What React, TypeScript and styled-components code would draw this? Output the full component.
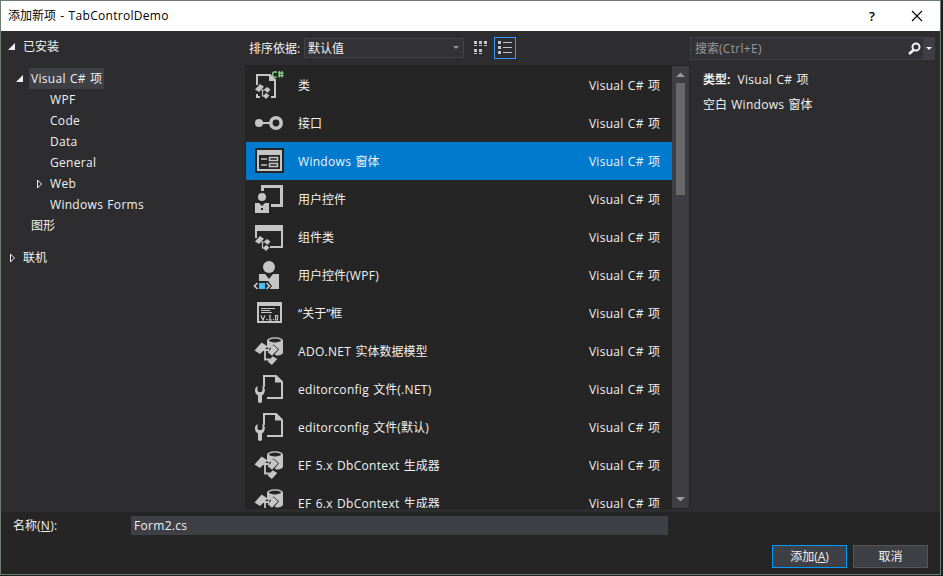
import React from "react";
import styled, { createGlobalStyle } from "styled-components";

const Global = createGlobalStyle`
  * { box-sizing: border-box; }
  html, body { margin: 0; background: #1e1e20; }
  body {
    font: 12px/16px "Open Sans", "Noto Sans CJK SC", sans-serif;
    color: #f1f1f1; overflow: hidden;
  }
`;

const Desktop = styled.div`width: 943px; height: 576px; background: #1e1e20;`;
const Dialog = styled.div`
  width: 941px; height: 575px; border: 1px solid #6b7d70; background: #2d2d30;
  display: flex; flex-direction: column;
`;
const Latin = styled.span`letter-spacing: 0.3px; word-spacing: 0.8px;`;
const TitleBar = styled.header`
  height: 30px; flex: none; background: #fff; color: #000; display: flex; align-items: center;
  padding: 0 17px 0 7px; white-space: pre;
`;
const TitleText = styled.span`flex: 1;`;
const TitleButton = styled.span`
  width: 12px; height: 16px; margin-left: 33px; display: flex; align-items: center; justify-content: center;
  font-size: 13px; font-weight: 600;
`;
const Body = styled.main`height: 481px; flex: none; display: flex;`;
const Sidebar = styled.nav`width: 244px; flex: none; padding-top: 5px;`;
const TreeRow = styled.div<{ $indent: number; $gap?: number }>`
  height: 21px; display: flex; align-items: center; padding-left: ${p => p.$indent}px;
  margin-top: ${p => p.$gap ?? 0}px;
`;
const Twisty = styled.svg`width: 8px; height: 10px; margin-right: 5px; flex: none;`;
const TreeLabel = styled.span<{ $active?: boolean }>`
  height: 21px; line-height: 22px; padding: 0 2px; white-space: nowrap;
  background: ${p => (p.$active ? "#3f3f46" : "transparent")};
`;
const Center = styled.section`width: 445px; flex: none; display: flex; flex-direction: column;`;
const SortBar = styled.div`height: 34px; display: flex; align-items: center; padding-left: 4px;`;
const SortLabel = styled.span`padding-top: 2px; width: 51px; white-space: nowrap;`;
const Combo = styled.div`
  width: 160px; height: 20px; margin-left: 4px; padding: 0 3px; border: 1px solid #434346; background: #333337;
  display: flex; align-items: center; justify-content: space-between;
`;
const ComboValue = styled.span`padding-top: 2px;`;
const ViewButton = styled.span<{ $active?: boolean; $left: number }>`
  width: 22px; height: 22px; margin-left: ${p => p.$left}px; display: flex;
  border: 1px solid ${p => (p.$active ? "#3399ff" : "transparent")};
`;
const ListFrame = styled.div`height: 444px; background: #252526; display: flex; padding: 1px;`;
const List = styled.div`flex: 1; overflow: hidden;`;
const Item = styled.div<{ $selected: boolean }>`
  height: 38px; display: flex; align-items: center; padding: 0 12px 0 7px;
  background: ${p => (p.$selected ? "#007acc" : "transparent")};
`;
const ItemIcon = styled.svg`width: 32px; height: 32px; flex: none; margin-right: 13px;`;
const ItemName = styled.span`flex: 1; padding-top: 2px; white-space: nowrap;`;
const ItemKind = styled.span`padding-top: 2px; white-space: nowrap;`;
const Scrollbar = styled.div`
  width: 17px; background: #3e3e42; display: flex; flex-direction: column; align-items: center;
  justify-content: space-between;
`;
const ScrollTrack = styled.div`width: 9px; flex: 1;`;
const ScrollThumb = styled.div`height: 112px; background: #686868;`;
const ScrollArrow = styled.svg`width: 17px; height: 17px; flex: none;`;
const Details = styled.aside`width: 245px; padding-top: 6px;`;
const Search = styled.div`
  height: 23px; border: 1px solid #3f3f46; background: #333337; display: flex; align-items: center;
  color: #999; padding-left: 4px; line-height: 20px;
`;
const SearchText = styled.span`flex: 1;`;
const SearchMenu = styled.span`
  width: 11px; height: 21px; background: #3f3f46; display: flex; align-items: center; justify-content: center;
`;
const DetailLine = styled.p<{ $gap: number }>`margin: ${p => p.$gap}px 0 0 13px; height: 16px; white-space: pre;`;
const DetailKey = styled.strong`margin-right: 7px;`;
const Footer = styled.footer`flex: 1; background: #252526; display: flex; flex-direction: column;`;
const NameRow = styled.label`
  display: flex; align-items: center; height: 19px; margin-top: 4px; padding-left: 12px;
`;
const NameLabel = styled.span`width: 118px;`;
const NameField = styled.span`width: 537px; height: 19px; line-height: 19px; background: #3f3f46; padding-left: 3px;`;
const Buttons = styled.div`display: flex; justify-content: flex-end; gap: 6px; padding: 10px 12px 0 0;`;
const Button = styled.button<{ $edge: string }>`
  width: 75px; height: 23px; padding: 0; font: inherit; color: #f1f1f1; background: #3f3f46;
  border: 1px solid ${p => p.$edge};
`;

/* Latin runs are set slightly wider than the Chinese text around them. */
const Text = ({ children }: { children: string }) => (
  <>
    {children.split(/([\x20-\x7e]+)/).map((run, i) => (i % 2 ? <Latin key={i}>{run}</Latin> : run))}
  </>
);

const G = "#c5c5c5";
const D = "#252526";

const Nodes = () => (
  <>
    <path d="M2 20.500L7 15l4 2.800-5 5.200z M11 20.500l3-2.500 3.500 2.500-3 3.500z M10 27l3-3 3.500 2.500-3.500 3.500z" fill={G} />
    <path d="M8 21h4M9.500 21v6h2.500" stroke={G} strokeWidth="1.200" fill="none" />
  </>
);

const Database = () => (
  <>
    <path d="M14 6c0-5 16-5 16 0v12c-1 2-4 2.500-7 2.500L14 12z" fill={G} />
    <ellipse cx="22" cy="5.500" rx="6" ry="1.900" fill={D} />
    <path d="M1.500 15.500L8.700 7.500l6 4L7 19z" fill={G} />
    <path d="M10 15.500h5l5.500-6 5.500 4.700-6.700 7.800-3.800-3.200" fill={D} />
    <path d="M9 15h7M12 15v9.500h5" stroke={G} strokeWidth="1.800" fill="none" />
    <path d="M14.500 17l3.500-3v-2.500l2.500-1.300 4.500 4-6 6.600z" fill={G} />
    <path d="M14.700 26.500l5-5.300 4.600 2.800-5.500 6z" fill={G} />
  </>
);

const Config = () => (
  <>
    <path d="M11 14V3h12l6 6v16H14" stroke={G} strokeWidth="2" fill="none" />
    <path d="M22 2l8 7.500h-8z" fill={G} />
    <path d="M4.500 13v4.500l1 1.500h3l1-1.500V13c2 1 2.700 3 2.300 5S10.500 21.500 9 22.500V29q-2 2-4 0v-6.500C3.500 21.500 2.200 20 2 18S2.500 14 4.500 13z" fill={G} />
  </>
);

const icons: Record<string, React.ReactNode> = {
  class: (
    <>
      <path d="M4 16V6h13l5 5v17h-4M4 25v3h3" stroke={G} strokeWidth="2" fill="none" />
      <path d="M16 5l7 7h-7z" fill={G} />
      <Nodes />
      <path d="M24 3h-3l-1.300 1v3l1.300 1.200h3M26.500 2v6.500M29 2v6.500M25 4h5.500M25 6.600h5.500" stroke="#89d185" strokeWidth="1.300" fill="none" />
    </>
  ),
  interface: (
    <>
      <circle cx="6" cy="16" r="4" fill={G} />
      <path d="M9 16h9" stroke={G} strokeWidth="2" />
      <circle cx="23" cy="16" r="5.200" fill="none" stroke={G} strokeWidth="3.600" />
    </>
  ),
  form: (
    <>
      <path d="M2 3h29v25H2z" fill={D} />
      <path d="M4 5h25v21H4z" fill={G} />
      <path d="M6 10h21v14H6z" fill={D} />
      <path d="M8 14h6M8 20h6M16.500 12.500h8v3h-8zM16.500 18.500h8v3h-8z" stroke={G} strokeWidth="1.500" fill="none" />
    </>
  ),
  user: (
    <>
      <path d="M9.500 8V3.500h19v19H18" stroke={G} strokeWidth="3" fill="none" />
      <circle cx="9" cy="14" r="4" fill={G} />
      <path d="M2 20h4l3 3 3-3h4v10H2z" fill={G} />
      <path d="M8 25h2v2H8z" fill={D} />
    </>
  ),
  component: (
    <>
      <path d="M2 4h28v23H17v-2h11V10H4v7H2z" fill={G} />
      <Nodes />
    </>
  ),
  wpf: (
    <>
      <circle cx="16" cy="8" r="6" fill={G} />
      <path d="M6 15h6l4 5 4-5h6v15H6z" fill={G} />
      <path d="M0 22h15l4 5-4 5H0z" fill={D} />
      <path d="M6 24h6v6H6z" fill="#3fc0f8" />
      <path d="M4.500 24l-3 3 3 3M13.500 24l3 3-3 3" fill="none" stroke={G} strokeWidth="1.700" />
    </>
  ),
  about: (
    <>
      <path d="M4 5h25v21H4z" fill={G} />
      <path d="M6 9h21v15H6z" fill={D} />
      <path d="M8 11.500h14M8 13.500h9M8 15.500h11" stroke={G} strokeWidth="1" />
      <path d="M8 18.500l2 4.500 2-4.500M13 22.500h1.500M16 19l1-.5V23M15.500 23h3.500M19.800 22.500h1.200M22.500 18.500h2V23h-2z" stroke={G} strokeWidth="1.200" fill="none" />
    </>
  ),
  database: <Database />,
  config: <Config />,
};

const items: [string, string][] = [
  ["class", "类"],
  ["interface", "接口"],
  ["form", "Windows 窗体"],
  ["user", "用户控件"],
  ["component", "组件类"],
  ["wpf", "用户控件(WPF)"],
  ["about", "“关于”框"],
  ["database", "ADO.NET 实体数据模型"],
  ["config", "editorconfig 文件(.NET)"],
  ["config", "editorconfig 文件(默认)"],
  ["database", "EF 5.x DbContext 生成器"],
  ["database", "EF 6.x DbContext 生成器"],
];

const Expanded = () => (
  <Twisty viewBox="0 0 8 10"><path d="M7 1v7H0z" fill="#f1f1f1" /></Twisty>
);
const Collapsed = () => (
  <Twisty viewBox="0 0 8 10"><path d="M2.500 1v8L6.500 5z" fill="none" stroke="#f1f1f1" /></Twisty>
);

export default function App() {
  return (
    <Desktop>
      <Global />
      <Dialog>
        <TitleBar>
          <TitleText><Text>添加新项 - TabControlDemo</Text></TitleText>
          <TitleButton>?</TitleButton>
          <TitleButton>
            <svg width="12" height="12"><path d="M1 1l10 10M11 1L1 11" stroke="#000" strokeWidth="1.100" /></svg>
          </TitleButton>
        </TitleBar>
        <Body>
          <Sidebar>
            <TreeRow $indent={7}><Expanded /><TreeLabel>已安装</TreeLabel></TreeRow>
            <TreeRow $indent={15} $gap={11}><Expanded /><TreeLabel $active><Text>Visual C# 项</Text></TreeLabel></TreeRow>
            <TreeRow $indent={47}><TreeLabel><Text>WPF</Text></TreeLabel></TreeRow>
            <TreeRow $indent={47}><TreeLabel><Text>Code</Text></TreeLabel></TreeRow>
            <TreeRow $indent={47}><TreeLabel><Text>Data</Text></TreeLabel></TreeRow>
            <TreeRow $indent={47}><TreeLabel><Text>General</Text></TreeLabel></TreeRow>
            <TreeRow $indent={34}><Collapsed /><TreeLabel><Text>Web</Text></TreeLabel></TreeRow>
            <TreeRow $indent={47}><TreeLabel><Text>Windows Forms</Text></TreeLabel></TreeRow>
            <TreeRow $indent={28}><TreeLabel>图形</TreeLabel></TreeRow>
            <TreeRow $indent={7} $gap={11}><Collapsed /><TreeLabel>联机</TreeLabel></TreeRow>
          </Sidebar>
          <Center>
            <SortBar>
              <SortLabel>排序依据:</SortLabel>
              <Combo>
                <ComboValue>默认值</ComboValue>
                <svg width="7" height="4"><path d="M0 0h6L3 3z" fill="#999" /></svg>
              </Combo>
              <ViewButton $left={5}>
                <svg width="20" height="20">
                  <path d="M4 3h3v3H4zM9 3h3v3H9zM14 3h3v3h-3zM4 7h3v1H4zM9 7h3v1H9zM14 7h3v1h-3zM4 11h3v3H4zM9 11h3v3H9zM4 15h3v1H4zM9 15h3v1H9z" fill={G} />
                </svg>
              </ViewButton>
              <ViewButton $active $left={3}>
                <svg width="20" height="20">
                  <path d="M3 3h3v3H3zM3 8h3v3H3zM3 13h3v3H3zM8 4h9v1H8zM8 9h9v1H8zM8 14h9v1H8z" fill={G} />
                </svg>
              </ViewButton>
            </SortBar>
            <ListFrame>
              <List>
                {items.map(([icon, name]) => (
                  <Item key={name} $selected={icon === "form"}>
                    <ItemIcon viewBox="0 0 32 32">{icons[icon]}</ItemIcon>
                    <ItemName><Text>{name}</Text></ItemName>
                    <ItemKind><Text>Visual C# 项</Text></ItemKind>
                  </Item>
                ))}
              </List>
              <Scrollbar>
                <ScrollArrow><path d="M4 11h9L8.500 6.500z" fill="#999" /></ScrollArrow>
                <ScrollTrack><ScrollThumb /></ScrollTrack>
                <ScrollArrow><path d="M4 6h9l-4.500 4.500z" fill="#999" /></ScrollArrow>
              </Scrollbar>
            </ListFrame>
          </Center>
          <Details>
            <Search>
              <SearchText><Text>搜索(Ctrl+E)</Text></SearchText>
              <svg width="17" height="16">
                <circle cx="10" cy="6" r="3.500" fill="none" stroke="#f1f1f1" strokeWidth="2" />
                <path d="M7.500 9L3 13" stroke="#f1f1f1" strokeWidth="2.600" />
              </svg>
              <SearchMenu><svg width="6" height="3"><path d="M0 0h6L3 3z" fill="#f1f1f1" /></svg></SearchMenu>
            </Search>
            <DetailLine $gap={12}><DetailKey>类型:</DetailKey><Text>Visual C# 项</Text></DetailLine>
            <DetailLine $gap={9}><Text>空白 Windows 窗体</Text></DetailLine>
          </Details>
        </Body>
        <Footer>
          <NameRow>
            <NameLabel>名称<Latin>(<u>N</u>):</Latin></NameLabel>
            <NameField><Text>Form2.cs</Text></NameField>
          </NameRow>
          <Buttons>
            <Button $edge="#0097fb">添加(<u>A</u>)</Button>
            <Button $edge="#555558">取消</Button>
          </Buttons>
        </Footer>
      </Dialog>
    </Desktop>
  );
}
